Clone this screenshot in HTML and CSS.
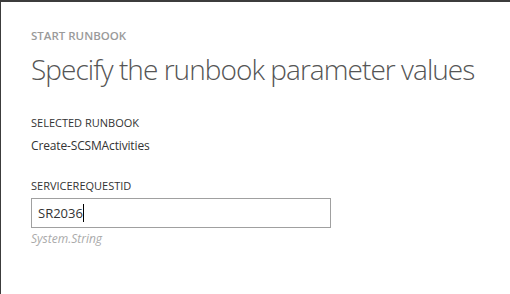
FILE: index.html
```html
<!DOCTYPE html>
<html>
<head>
  <meta charset="UTF-8">
  <title>Start Runbook</title>
  <link rel="stylesheet" href="styles.css">
</head>
<body>
<div class="panel">
  <div class="eyebrow">START RUNBOOK</div>
  <h1 class="title">Specify the runbook parameter values</h1>

  <div class="field">
    <div class="label">SELECTED RUNBOOK</div>
    <div class="value">Create-SCSMActivities</div>
  </div>

  <div class="field">
    <div class="label">SERVICEREQUESTID</div>
    <div class="input"><span>SR2036</span><span class="caret"></span></div>
    <div class="hint">System.String</div>
  </div>
</div>
</body>
</html>
```

FILE: styles.css
```css
html, body {
	margin: 0;
	height: 100%;
	background: #fff;
}
.panel {
	box-sizing: border-box;
	height: 100%;
	border-top: 2px solid #3c3c3c;
	border-left: 1px solid #3c3c3c;
	padding: 26px 0 0 30px;
	font-family: "Open Sans", "Noto Sans", sans-serif;
	color: #333;
}
.eyebrow {
	font-size: 11.5px;
	font-weight: 600;
	color: #9a9a9a;
	line-height: 16px;
}
.title {
	margin: 6px 0 0;
	font-size: 28px;
	font-weight: 300;
	letter-spacing: -0.95px;
	line-height: 38px;
	color: #555;
}
.field {
	margin-top: 27px;
}
.field + .field {
	margin-top: 24px;
}
.label {
	font-size: 11px;
	line-height: 15px;
	color: #333;
}
.value {
	margin-top: 7px;
	font-size: 12px;
	letter-spacing: -0.15px;
	line-height: 17px;
}
.input {
	margin-top: 5px;
	box-sizing: border-box;
	width: 300px;
	height: 30px;
	border: 1px solid #a0a0a0;
	padding: 0 6px;
	display: flex;
	align-items: center;
	font-size: 13px;
}
.caret {
	display: inline-block;
	width: 1px;
	height: 18px;
	background: #000;
}
.hint {
	margin-top: 2px;
	font-size: 12px;
	font-style: italic;
	color: #aaa;
}
```
